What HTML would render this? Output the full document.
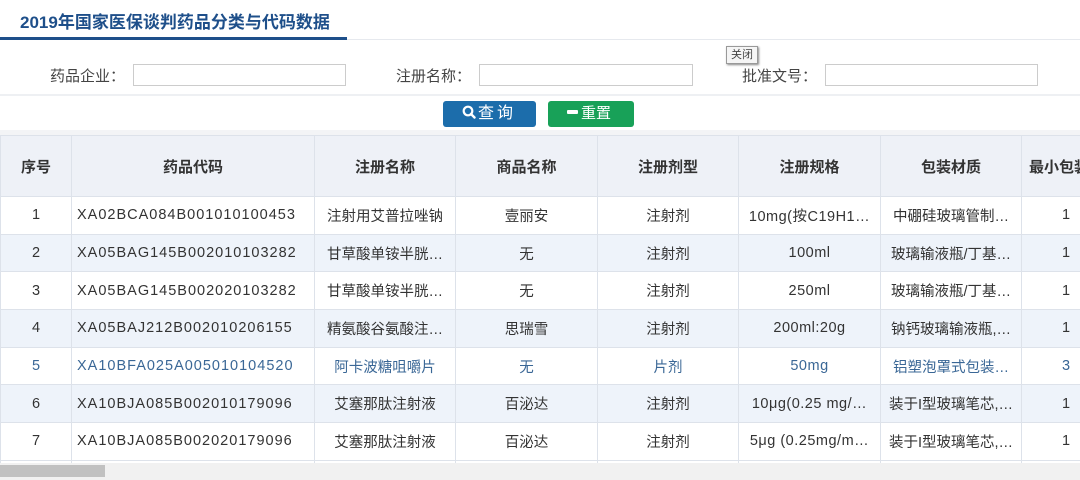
<!DOCTYPE html>
<html><head><meta charset="utf-8"><style>
*{margin:0;padding:0;box-sizing:border-box}
html,body{width:1080px;height:480px;overflow:hidden}
body{background:#fff;font-family:"Liberation Sans","Noto Sans CJK SC",sans-serif;position:relative;color:#333}
.abs{position:absolute}
.title{left:20px;top:8px;font-size:17px;font-weight:bold;color:#1e4f8a}
.inp{height:22px;border:1px solid #ccc;background:#fff;top:64px}
.lab{font-size:15px;color:#444;top:65px}
.wrap{position:absolute;left:0;top:135px;width:1080px;height:328px;overflow:hidden}
table{border-collapse:collapse;table-layout:fixed;width:1110px}
td,th{border:1px solid #dde2ea;text-align:center;font-size:14.5px;white-space:nowrap;overflow:hidden;height:37.7px;color:#333;font-weight:normal}
th{height:61px;background:#eef1f7;font-weight:bold;font-size:15px;color:#333}
tr.e td{background:#eef3fa}
tr.b td{color:#3a6796}
td.c{letter-spacing:1px;text-align:left;padding-left:5px}
td.s{letter-spacing:0.5px}
</style></head><body>
<div class="abs title">2019年国家医保谈判药品分类与代码数据</div>
<div class="abs" style="left:0;top:37px;width:347px;height:3px;background:#1e4f8a"></div>
<div class="abs" style="left:347px;top:39px;width:733px;height:1px;background:#e6e9ee"></div>
<div class="abs" style="left:0;top:94px;width:1080px;height:2px;background:#eef0f3"></div>
<div class="abs lab" style="left:50px">药品企业： </div>
<div class="abs inp" style="left:133px;width:213px"></div>
<div class="abs lab" style="left:396px">注册名称： </div>
<div class="abs inp" style="left:479px;width:214px"></div>
<div class="abs lab" style="left:742px">批准文号： </div>
<div class="abs inp" style="left:825px;width:213px"></div>
<div class="abs" style="left:726px;top:46px;width:32px;height:18px;border:1px solid #999;background:#f5f5f5;font-size:11px;color:#444;text-align:center;line-height:16px;box-shadow:1px 1px 2px #888">关闭</div>
<div class="abs" style="left:443px;top:101px;width:93px;height:26px;background:#1c6dab;border-radius:3px;color:#fff;font-size:16px;line-height:26px;letter-spacing:3px;padding-left:19px">
<svg width="14" height="14" viewBox="0 0 14 14" style="vertical-align:-1px;margin-right:2px"><circle cx="6" cy="6" r="4.3" fill="none" stroke="#fff" stroke-width="2.2"/><path d="M9 9 L12.5 12.5" stroke="#fff" stroke-width="2.4" stroke-linecap="round"/></svg>查询</div>
<div class="abs" style="left:548px;top:101px;width:86px;height:26px;background:#18a158;border-radius:3px;color:#fff;font-size:15px;line-height:26px;padding-left:19px">
<span style="display:inline-block;width:11px;height:4px;background:#fff;border-radius:1px;vertical-align:4px;margin-right:3px"></span>重置</div>
<div class="abs" style="left:0;top:130px;width:1080px;height:5px;background:#f3f4f6"></div>
<div class="wrap"><table>
<colgroup><col style="width:71px"><col style="width:243px"><col style="width:141px"><col style="width:142px"><col style="width:141px"><col style="width:142px"><col style="width:141px"><col style="width:89px"></colgroup>
<tr><th>序号</th><th>药品代码</th><th>注册名称</th><th>商品名称</th><th>注册剂型</th><th>注册规格</th><th>包装材质</th><th style="text-align:left;padding-left:7px">最小包装</th></tr>
<tr><td>1</td><td class="c">XA02BCA084B001010100453</td><td>注射用艾普拉唑钠</td><td>壹丽安</td><td>注射剂</td><td class="s">10mg(按C19H1…</td><td>中硼硅玻璃管制…</td><td>1</td></tr>
<tr class="e"><td>2</td><td class="c">XA05BAG145B002010103282</td><td>甘草酸单铵半胱…</td><td>无</td><td>注射剂</td><td class="s">100ml</td><td>玻璃输液瓶/丁基…</td><td>1</td></tr>
<tr><td>3</td><td class="c">XA05BAG145B002020103282</td><td>甘草酸单铵半胱…</td><td>无</td><td>注射剂</td><td class="s">250ml</td><td>玻璃输液瓶/丁基…</td><td>1</td></tr>
<tr class="e"><td>4</td><td class="c">XA05BAJ212B002010206155</td><td>精氨酸谷氨酸注…</td><td>思瑞雪</td><td>注射剂</td><td class="s">200ml:20g</td><td>钠钙玻璃输液瓶,…</td><td>1</td></tr>
<tr class="b"><td>5</td><td class="c">XA10BFA025A005010104520</td><td>阿卡波糖咀嚼片</td><td>无</td><td>片剂</td><td class="s">50mg</td><td>铝塑泡罩式包装…</td><td>3</td></tr>
<tr class="e"><td>6</td><td class="c">XA10BJA085B002010179096</td><td>艾塞那肽注射液</td><td>百泌达</td><td>注射剂</td><td class="s">10μg(0.25 mg/…</td><td>装于I型玻璃笔芯,…</td><td>1</td></tr>
<tr><td>7</td><td class="c">XA10BJA085B002020179096</td><td>艾塞那肽注射液</td><td>百泌达</td><td>注射剂</td><td class="s">5μg (0.25mg/m…</td><td>装于I型玻璃笔芯,…</td><td>1</td></tr>
<tr><td></td><td></td><td></td><td></td><td></td><td></td><td></td><td></td></tr>
</table></div>
<div class="abs" style="left:0;top:463px;width:1080px;height:17px;background:#f1f1f1"></div>
<div class="abs" style="left:0;top:465px;width:105px;height:12px;background:#c1c1c1"></div>
</body></html>
